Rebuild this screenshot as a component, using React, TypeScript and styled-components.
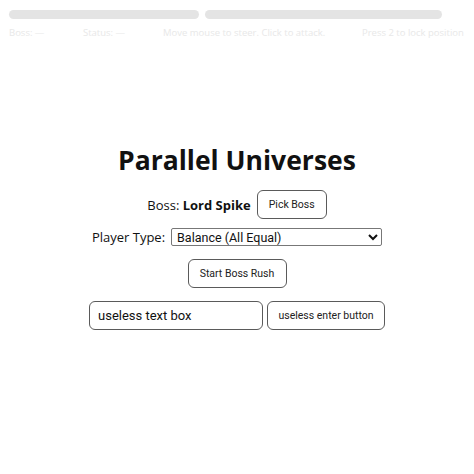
import React from "react";
import styled, { createGlobalStyle } from "styled-components";

const Global = createGlobalStyle`
  html, body { margin: 0; padding: 0; background: #fff; }
  body { font-family: "Open Sans", "Liberation Sans", sans-serif; color: #111; }
`;

const Page = styled.div`
  width: 474px;
  height: 474px;
  overflow: hidden;
  display: flex;
  flex-direction: column;
`;

const Hud = styled.div`
  padding: 10px 0 0 9px;
  display: flex;
  flex-direction: column;
  gap: 7px;
`;

const Bars = styled.div`
  display: flex;
  gap: 6px;
`;

const Bar = styled.div<{ $w: number }>`
  width: ${(p) => p.$w}px;
  height: 9px;
  border-radius: 5px;
  background: #e4e4e4;
`;

const HudLine = styled.div`
  display: flex;
  white-space: nowrap;
  font-size: 9.5px;
  color: #e8e8e8;
  line-height: 13px;
`;

const HudItem = styled.span<{ $w: number }>`
  flex: 0 0 ${(p) => p.$w}px;
`;

const Main = styled.div`
  display: flex;
  flex-direction: column;
  align-items: center;
  padding-top: 103px;
`;

const Title = styled.h1`
  margin: 0;
  font-size: 26.5px;
  font-weight: 700;
  line-height: 36px;
  color: #111;
`;

const Row = styled.div<{ $mt: number; $gap?: number }>`
  display: flex;
  align-items: center;
  gap: ${(p) => p.$gap ?? 6}px;
  margin-top: ${(p) => p.$mt}px;
  font-size: 13px;
`;

const Strong = styled.b`
  font-weight: 700;
`;

const Button = styled.button<{ $w: number }>`
  width: ${(p) => p.$w}px;
  height: 29px;
  background: #fff;
  border: 1px solid #5a5a5a;
  border-radius: 6px;
  font-family: Roboto, "Liberation Sans", sans-serif;
  font-size: 10.5px;
  color: #222;
  padding: 0;
`;

const Select = styled.select`
  width: 211px;
  height: 18px;
  font-family: Roboto, "Liberation Sans", sans-serif;
  font-size: 12.5px;
  border: 1px solid #777;
  border-radius: 2px;
  background: #fff;
  color: #111;
  padding: 0 0 0 1px;
`;

const TextBox = styled.input`
  width: 174px;
  height: 29px;
  box-sizing: border-box;
  border: 1px solid #5a5a5a;
  border-radius: 6px;
  padding: 0 8px;
  font-family: Roboto, "Liberation Sans", sans-serif;
  font-size: 13px;
  color: #111;
  outline: none;
`;

export default function App() {
  return (
    <Page>
      <Global />
      <Hud>
        <Bars>
          <Bar $w={190} />
          <Bar $w={237} />
        </Bars>
        <HudLine>
          <HudItem $w={74}>Boss: —</HudItem>
          <HudItem $w={80}>Status: —</HudItem>
          <HudItem $w={199}>Move mouse to steer. Click to attack.</HudItem>
          <HudItem $w={110}>Press 2 to lock position</HudItem>
        </HudLine>
      </Hud>
      <Main>
        <Title>Parallel Universes</Title>
        <Row $mt={12}>
          <span>
            Boss: <Strong>Lord Spike</Strong>
          </span>
          <Button $w={70}>Pick Boss</Button>
        </Row>
        <Row $mt={9}>
          <span>Player Type:</span>
          <Select defaultValue="balance">
            <option value="balance">Balance (All Equal)</option>
          </Select>
        </Row>
        <Row $mt={13}>
          <Button $w={99}>Start Boss Rush</Button>
        </Row>
        <Row $mt={13} $gap={4}>
          <TextBox defaultValue="useless text box" />
          <Button $w={118}>useless enter button</Button>
        </Row>
      </Main>
    </Page>
  );
}
